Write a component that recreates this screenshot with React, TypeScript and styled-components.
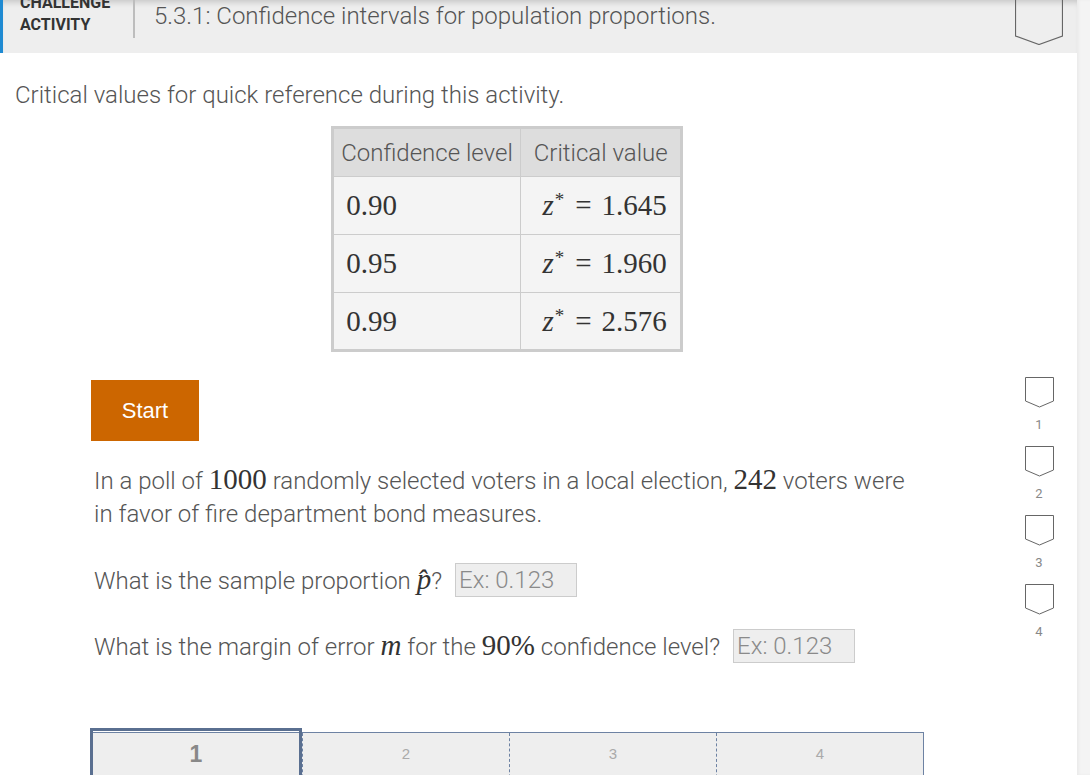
import React from "react";
import styled, { createGlobalStyle } from "styled-components";

const GlobalStyle = createGlobalStyle`
  html, body {
    margin: 0;
    padding: 0;
    background: #ffffff;
  }
  body {
    font-family: Roboto, "Liberation Sans", Arial, sans-serif;
    color: #555;
  }
`;

const criticalRows = [
  { level: "0.90", value: "1.645" },
  { level: "0.95", value: "1.960" },
  { level: "0.99", value: "2.576" },
];

const levels = [1, 2, 3, 4];

function Shield({ width, height }: { width: number; height: number }) {
  const side = Math.round(height * 0.8);
  return (
    <svg width={width} height={height} viewBox={`0 0 ${width} ${height}`}>
      <polyline
        points={`0.5,0 0.5,${side} ${width / 2},${height - 0.5} ${width - 0.5},${side} ${width - 0.5},0`}
        fill="none"
        stroke="#666"
        strokeWidth="1.2"
      />
    </svg>
  );
}

function LevelShield() {
  return (
    <svg width="29" height="31" viewBox="0 0 29 31">
      <path
        d="M0.5 0.5 H28.5 V24 L14.5 30 L0.5 24 Z"
        fill="#fff"
        stroke="#666"
        strokeWidth="1"
      />
    </svg>
  );
}

function App(): JSX.Element {
  return (
    <>
      <GlobalStyle />
      <Page>
        <Main>
          <Header>
            <Label>
              <span>Challenge</span>
              <span>Activity</span>
            </Label>
            <Divider />
            <Title>5.3.1: Confidence intervals for population proportions.</Title>
            <HeaderBadge>
              <Shield width={48} height={45} />
            </HeaderBadge>
          </Header>
          <Body>
            <Content>
              <Intro>Critical values for quick reference during this activity.</Intro>
              <Activity>
                <Table>
                  <thead>
                    <tr>
                      <HeadCell $width={187} $inset={7}>
                        Confidence level
                      </HeadCell>
                      <HeadCell $width={161} $inset={13}>
                        Critical value
                      </HeadCell>
                    </tr>
                  </thead>
                  <tbody>
                    {criticalRows.map((r) => (
                      <tr key={r.level}>
                        <Cell>
                          <MathText>{r.level}</MathText>
                        </Cell>
                        <Cell $right>
                          <MathText>
                            <Var>z</Var>
                            <Sup>*</Sup>
                            <Eq>=</Eq>
                            {r.value}
                          </MathText>
                        </Cell>
                      </tr>
                    ))}
                  </tbody>
                </Table>
                <StartButton>Start</StartButton>
                <Prompt>
                  In a poll of <MathText>1000</MathText> randomly selected voters in a local election,{" "}
                  <MathText>242</MathText> voters were in favor of fire department bond measures.
                </Prompt>
                <Question>
                  <span>
                    What is the sample proportion <BoldVar>p&#770;</BoldVar>?
                  </span>
                  <Answer placeholder="Ex: 0.123" />
                </Question>
                <Question>
                  <span>
                    What is the margin of error <BoldVar>m</BoldVar> for the <MathText>90%</MathText>{" "}
                    confidence level?
                  </span>
                  <Answer placeholder="Ex: 0.123" />
                </Question>
                <Progress>
                  {levels.map((n) => (
                    <Step key={n} $active={n === 1}>
                      {n}
                    </Step>
                  ))}
                </Progress>
              </Activity>
            </Content>
            <LevelList>
              {levels.map((n) => (
                <LevelItem key={n}>
                  <LevelShield />
                  <LevelNumber>{n}</LevelNumber>
                </LevelItem>
              ))}
            </LevelList>
          </Body>
        </Main>
        <Gutter />
      </Page>
    </>
  );
}

const Page = styled.div`
  display: flex;
  width: 1090px;
  height: 775px;
  overflow: hidden;
`;

const Main = styled.div`
  width: 1077px;
  flex-shrink: 0;
  display: flex;
  flex-direction: column;
  background: #fff;
`;

const Gutter = styled.div`
  flex: 1;
  background: #f4f4f4;
  box-shadow: inset 2px 0 3px rgba(0, 0, 0, 0.04);
`;

const Header = styled.header`
  height: 53px;
  flex-shrink: 0;
  display: flex;
  align-items: flex-start;
  background: #eeeeee;
  border-left: 3px solid #1f8ad2;
  box-shadow: inset 0 6px 6px -4px rgba(0, 0, 0, 0.18);
  overflow: hidden;
`;

const Label = styled.div`
  width: 113px;
  padding-left: 17px;
  margin-top: -8px;
  display: flex;
  flex-direction: column;
  font-size: 16px;
  line-height: 22px;
  font-weight: 700;
  text-transform: uppercase;
  color: #333;
`;

const Divider = styled.div`
  width: 2px;
  height: 38px;
  background: #bdbdbd;
`;

const Title = styled.h1`
  flex: 1;
  margin: 3px 0 0 19px;
  font-size: 24px;
  line-height: 26px;
  font-weight: 300;
  color: #555;
`;

const HeaderBadge = styled.div`
  width: 48px;
  height: 45px;
  margin-right: 14px;
  display: flex;
`;

const Body = styled.div`
  flex: 1;
  display: flex;
`;

const Content = styled.div`
  flex: 1;
  padding-left: 15px;
`;

const Intro = styled.p`
  margin: 27px 0 16px;
  font-size: 24px;
  line-height: 30px;
  font-weight: 300;
  color: #555;
`;

const Activity = styled.div`
  width: 834px;
  margin-left: 75px;
  display: flex;
  flex-direction: column;
`;

const Table = styled.table`
  align-self: center;
  border-collapse: collapse;
  border: 3px solid #cccccc;
  table-layout: fixed;
`;

const HeadCell = styled.th<{ $width: number; $inset: number }>`
  width: ${(p) => p.$width}px;
  height: 49px;
  box-sizing: border-box;
  padding: 0 7px 0 ${(p) => p.$inset}px;
  background: #dddddd;
  border: 1px solid #cccccc;
  font-size: 24px;
  font-weight: 300;
  color: #555;
  text-align: left;
  white-space: nowrap;
`;

const Cell = styled.td<{ $right?: boolean }>`
  height: 58px;
  box-sizing: border-box;
  padding: 0 13px 0 12px;
  background: #f4f4f4;
  border: 1px solid #cccccc;
  text-align: ${(p) => (p.$right ? "right" : "left")};
  color: #333;
`;

const MathText = styled.span`
  font-family: "Liberation Serif", "DejaVu Serif", serif;
  font-size: 29px;
  line-height: 1;
  color: #333;
`;

const Var = styled.i`
  font-family: "Liberation Serif", serif;
`;

const Sup = styled.sup`
  font-size: 19px;
  vertical-align: 9px;
  line-height: 0;
  margin: 0 11px 0 1px;
`;

const Eq = styled.span`
  margin-right: 10px;
`;

const BoldVar = styled.b`
  font-family: "Liberation Serif", "DejaVu Serif", serif;
  font-style: italic;
  font-size: 29px;
  line-height: 1;
  color: #333;
`;

const StartButton = styled.button`
  align-self: flex-start;
  width: 108px;
  height: 61px;
  margin: 28px 0 0 1px;
  border: none;
  background: #cc6600;
  color: #fff;
  font-family: "Liberation Sans", Arial, sans-serif;
  font-size: 22px;
  cursor: pointer;
`;

const Prompt = styled.p`
  margin: 24px 0 0;
  padding: 0 4px;
  font-size: 24px;
  line-height: 33px;
  font-weight: 300;
  color: #555;
`;

const Question = styled.div`
  display: flex;
  align-items: center;
  gap: 13px;
  margin-top: 32px;
  padding-left: 4px;
  font-size: 24px;
  font-weight: 300;
  color: #555;
`;

const Answer = styled.input`
  width: 122px;
  height: 34px;
  box-sizing: border-box;
  padding: 0 3px;
  background: #eeeeee;
  border: 1px solid #cccccc;
  font-family: Roboto, sans-serif;
  font-size: 24px;
  font-weight: 300;
  color: #555;
  &::placeholder {
    color: #8a8a8a;
  }
`;

const Progress = styled.div`
  display: flex;
  margin-top: 69px;
  height: 60px;
  background: #eeeeee;
  border-top: 1px solid #6d82a3;
  border-right: 1px solid #6d82a3;
`;

const Step = styled.div<{ $active?: boolean }>`
  flex: 1;
  display: flex;
  justify-content: center;
  padding-top: ${(p) => (p.$active ? "10px" : "12px")};
  box-sizing: border-box;
  font-family: "Liberation Sans", Arial, sans-serif;
  font-size: ${(p) => (p.$active ? "23px" : "15px")};
  font-weight: ${(p) => (p.$active ? 700 : 400)};
  color: ${(p) => (p.$active ? "#888" : "#aaa")};
  border-left: ${(p) => (p.$active ? "3px solid #5a6f90" : "1px dashed #6d82a3")};
  border-top: ${(p) => (p.$active ? "3px solid #5a6f90" : "none")};
  border-right: ${(p) => (p.$active ? "3px solid #5a6f90" : "none")};
  margin-top: ${(p) => (p.$active ? "-5px" : "0")};
  & + & {
    border-left: 1px dashed #6d82a3;
  }
`;

const LevelList = styled.div`
  width: 62px;
  margin-right: 7px;
  padding-top: 324px;
  display: flex;
  flex-direction: column;
  align-items: center;
  gap: 14px;
`;

const LevelItem = styled.div`
  display: flex;
  flex-direction: column;
  align-items: center;
  gap: 10px;
`;

const LevelNumber = styled.span`
  font-size: 13px;
  line-height: 14px;
  color: #888;
`;

export default App;
